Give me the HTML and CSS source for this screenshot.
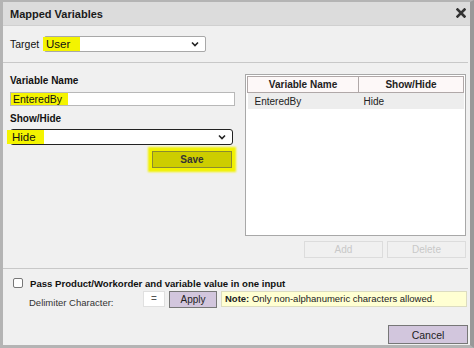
FILE: index.html
```html
<!DOCTYPE html>
<html lang="en">
<head>
    <meta charset="UTF-8">
    <title>Mapped Variables</title>
    <link rel="stylesheet" href="styles.css">
</head>
<body>
    <div class="dialog">
        <div class="title-bar">
            <span>Mapped Variables</span>
            <svg class="close" width="10" height="10" viewBox="0 0 10 10">
                <path d="M1.5 1.5 L8.5 8.5 M8.5 1.5 L1.5 8.5" stroke="#333" stroke-width="2.6" stroke-linecap="square"/>
            </svg>
        </div>

        <div class="target-row">
            <span class="target-label">Target</span>
            <div class="select target-select">
                <span class="hl">User</span>
                <svg class="chev" width="8" height="6" viewBox="0 0 8 6"><path d="M1 1.5 L4 4.5 L7 1.5" fill="none" stroke="#222" stroke-width="1.6"/></svg>
            </div>
        </div>

        <div class="middle">
            <div class="left-col">
                <div class="label">Variable Name</div>
                <div class="input"><span class="hl">EnteredBy</span></div>
                <div class="label label-gap">Show/Hide</div>
                <div class="select hide-select">
                    <span class="hl">Hide</span>
                    <svg class="chev" width="8" height="6" viewBox="0 0 8 6"><path d="M1 1.5 L4 4.5 L7 1.5" fill="none" stroke="#222" stroke-width="1.6"/></svg>
                </div>
                <div class="save-wrap">
                    <button class="btn-save">Save</button>
                </div>
            </div>

            <div class="right-col">
                <div class="grid-box">
                    <table>
                        <thead>
                            <tr>
                                <th class="col-name">Variable Name</th>
                                <th>Show/Hide</th>
                            </tr>
                        </thead>
                        <tbody>
                            <tr class="row-sel">
                                <td>EnteredBy</td>
                                <td>Hide</td>
                            </tr>
                        </tbody>
                    </table>
                </div>
                <div class="grid-actions">
                    <button class="btn-disabled">Add</button>
                    <button class="btn-disabled">Delete</button>
                </div>
            </div>
        </div>

        <div class="bottom">
            <div class="check-row">
                <span class="checkbox"></span>
                <span class="check-text">Pass Product/Workorder and variable value in one input</span>
            </div>
            <div class="delim-row">
                <span class="delim-label">Delimiter Character:</span>
                <div class="delim-input">=</div>
                <button class="btn-purple btn-apply">Apply</button>
                <div class="note"><b>Note:</b> Only non-alphanumeric characters allowed.</div>
            </div>
            <div class="footer">
                <button class="btn-purple btn-cancel">Cancel</button>
            </div>
        </div>
    </div>
</body>
</html>
```

FILE: styles.css
```css
body {
    margin: 0;
    font-family: "Liberation Sans", Arial, sans-serif;
    font-size: 10px;
    color: #111;
}

.dialog {
    box-sizing: border-box;
    width: 474px;
    height: 348px;
    background: #f0f0f0;
    border-left: 3px solid #b4b4b4;
    border-right: 4px solid #999;
    border-top: 2px solid #b4b4b4;
    border-bottom: 3px solid #b4b4b4;
    display: flex;
    flex-direction: column;
}

.title-bar {
    height: 23px;
    background: #dcdcdc;
    border-bottom: 1px solid #d0d0d0;
    display: flex;
    align-items: center;
    justify-content: space-between;
    padding: 0 4px 0 7px;
    font-size: 11px;
    font-weight: bold;
    color: #1a1a1a;
}

.close {
    margin-top: -2px;
}

.target-row {
    height: 36px;
    display: flex;
    align-items: center;
    padding: 0 7px;
    border-bottom: 1px solid #c8c8c8;
    margin-right: 2px;
    font-size: 10.5px;
}

.target-label {
    width: 34px;
}

.select {
    box-sizing: border-box;
    height: 16px;
    background: #fff;
    border: 1px solid #a8a8a8;
    border-radius: 2px;
    display: flex;
    align-items: center;
    justify-content: space-between;
    padding-right: 6px;
}

.target-select {
    width: 162px;
    font-size: 11.5px;
}

.hl {
    background: #f4f400;
    padding: 0 8px 0 3px;
    line-height: 14px;
}

.target-select .hl {
    margin-left: -2px;
    padding-right: 10px;
}

.middle {
    height: 205px;
    display: flex;
    padding: 0 4px 0 7px;
}

.left-col {
    width: 225px;
    padding-top: 11px;
    display: flex;
    flex-direction: column;
}

.label {
    font-weight: bold;
    line-height: 14px;
}

.label-gap {
    margin-top: 6px;
}

.input {
    box-sizing: border-box;
    margin-top: 4px;
    height: 14px;
    background: #fff;
    border: 1px solid #b8b8b8;
    display: flex;
    align-items: center;
    font-size: 10.5px;
}

.input .hl {
    padding: 0 6px 0 2px;
    line-height: 12px;
}

.hide-select {
    margin-top: 3px;
    width: 223px;
    border: 1.5px solid #222;
    border-radius: 3px;
    font-size: 11.5px;
}

.hide-select .hl {
    margin-left: -4px;
    padding: 0 8px 0 5px;
}

.save-wrap {
    display: flex;
    justify-content: flex-end;
    margin-top: 6px;
    padding-right: 3px;
}

.btn-save {
    width: 80px;
    height: 17px;
    background: #cdcd00;
    border: 1px solid #8a8a30;
    font-family: inherit;
    font-size: 10px;
    font-weight: bold;
    color: #333;
    box-shadow: 0 0 2px 4px #f2f200;
}

.right-col {
    width: 221px;
    margin-left: 10px;
    padding-top: 11px;
}

.grid-box {
    box-sizing: border-box;
    height: 162px;
    background: #fff;
    border: 1px solid #a8a8a8;
    padding: 1px;
}

table {
    width: 100%;
    border-collapse: collapse;
}

th {
    height: 15px;
    padding: 0;
    background: #fdf8f8;
    border: 1px solid #b0a8a8;
    font-weight: bold;
    color: #222;
}

.col-name {
    width: 110px;
}

td {
    height: 16px;
    padding: 0 0 0 7px;
    color: #222;
}

td + td {
    padding-left: 5px;
}

.row-sel {
    background: #ededed;
}

.grid-actions {
    display: flex;
    justify-content: flex-end;
    gap: 4px;
    margin-top: 5px;
}

.btn-disabled {
    width: 79px;
    height: 17px;
    background: #f0f0f0;
    border: 1px solid #dcdcdc;
    font-family: inherit;
    font-size: 10px;
    color: #c8c8c8;
}

.bottom {
    flex: 1;
    border-top: 1px solid #c8c8c8;
    margin-right: 2px;
    padding: 8px 0 0 10px;
    display: flex;
    flex-direction: column;
}

.check-row {
    display: flex;
    align-items: center;
    height: 12px;
}

.checkbox {
    box-sizing: border-box;
    width: 10px;
    height: 10px;
    background: #fff;
    border: 1px solid #777;
    border-radius: 2px;
}

.check-text {
    margin-left: 7px;
    font-weight: bold;
    font-size: 9.6px;
}

.delim-row {
    display: flex;
    align-items: center;
    margin-top: 2px;
    height: 16px;
}

.delim-label {
    width: 114px;
    margin-left: 16px;
    margin-top: 6px;
    color: #333;
    font-size: 9.5px;
}

.delim-input {
    box-sizing: border-box;
    width: 22px;
    height: 16px;
    background: #fff;
    border: 1px solid #e0e0e0;
    text-align: center;
    line-height: 14px;
    color: #555;
}

.btn-purple {
    height: 17px;
    background: #d2c6dd;
    border: 1px solid #777;
    font-family: inherit;
    font-size: 10px;
    color: #222;
}

.btn-apply {
    width: 48px;
    margin-left: 4px;
}

.note {
    box-sizing: border-box;
    flex: 1;
    height: 16px;
    margin-left: 4px;
    margin-right: 1px;
    background: #ffffd2;
    border: 1px solid #dcdcc0;
    line-height: 14px;
    padding-left: 3px;
    font-size: 9.5px;
    white-space: nowrap;
    color: #222;
}

.footer {
    display: flex;
    justify-content: flex-end;
    margin-top: auto;
    margin-bottom: 1px;
}

.btn-cancel {
    width: 80px;
    height: 19px;
    font-size: 10.5px;
}
```
